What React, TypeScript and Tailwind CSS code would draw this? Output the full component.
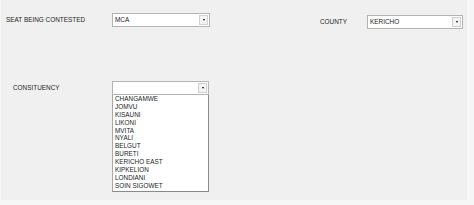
import React from "react";

const font = { fontFamily: '"Liberation Sans", Arial, sans-serif' };

function T({ children }: { children: React.ReactNode }) {
  return <span className="inline-block origin-left scale-x-[0.8] whitespace-nowrap">{children}</span>;
}

function Select({ value, w }: { value: string; w: string }) {
  return (
    <div className={`flex h-[14px] ${w} border border-[#b4b4b4] bg-white`}>
      <div className="flex-1 pl-[2px] text-[8px] leading-[12px] text-[#1c1c1c]">
        <T>{value}</T>
      </div>
      <div className="m-[1px] flex w-[9px] items-center justify-center border border-[#d0d0d0] bg-[#f4f4f4]">
        <div className="h-0 w-0 border-x-[1.5px] border-t-[2px] border-x-transparent border-t-black" />
      </div>
    </div>
  );
}

const items = [
  "CHANGAMWE",
  "JOMVU",
  "KISAUNI",
  "LIKONI",
  "MVITA",
  "NYALI",
  "BELGUT",
  "BURETI",
  "KERICHO EAST",
  "KIPKELION",
  "LONDIANI",
  "SOIN SIGOWET",
];

export default function App() {
  return (
    <div className="h-[205px] w-[474px] bg-[#f6f6f6]" style={font}>
      <div className="ml-[1px] h-[200px] w-[466px] bg-[#f0f0f0] pt-[13px] text-[8px] text-[#222]">
        <div className="flex items-start">
          <div className="w-[111px] pl-[5px] leading-[14px]">
            <T>SEAT BEING CONTESTED</T>
          </div>
          <Select value="MCA" w="w-[98px]" />
          <div className="ml-[110px] mt-[2px] w-[47px] leading-[14px]">
            <T>COUNTY</T>
          </div>
          <div className="mt-[2px]">
            <Select value="KERICHO" w="w-[96px]" />
          </div>
        </div>
        <div className="mt-[52px] flex items-start">
          <div className="w-[111px] pl-[12px] leading-[14px]">
            <T>CONSITUENCY</T>
          </div>
          <div className="flex w-[97px] flex-col">
            <Select value="" w="w-[97px]" />
            <div className="border border-t-0 border-[#8a8a8a] border-l-[#a8a8a8] bg-white pb-[1px] pl-[2px]">
              {items.map((it) => (
                <div key={it} className="h-[7.9px] text-[8px] leading-[8px] text-[#1c1c1c]">
                  <T>{it}</T>
                </div>
              ))}
            </div>
          </div>
        </div>
      </div>
    </div>
  );
}
